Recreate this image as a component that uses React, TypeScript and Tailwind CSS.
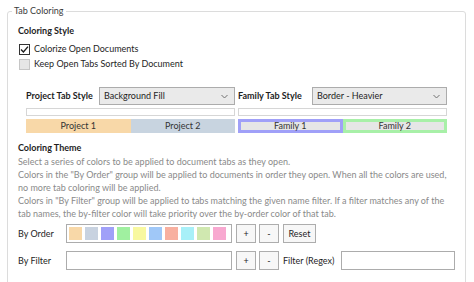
import React from 'react';

const swatches = ['#f8d8a8', '#c8d2e0', '#a0a0f8', '#a0f0a0', '#f8f8a0', '#a0c8f8', '#f8b0a0', '#a8f0f8', '#d0e8b0', '#f8a8d0'];

const Chevron = () => (
  <svg width="7" height="5" viewBox="0 0 7 5" className="shrink-0">
    <path d="M0.5 1 L3.5 4 L6.5 1" fill="none" stroke="#707070" strokeWidth="1" />
  </svg>
);

const Dropdown = ({ value, width }: { value: string; width: string }) => (
  <div className={`${width} h-[18px] flex items-center justify-between border border-[#acacac] bg-[#eaeaea] pl-[4px] pr-[6px] text-[#1e1e1e]`}>
    <span>{value}</span>
    <Chevron />
  </div>
);

const SmallButton = ({ label, width = 'w-[20px]' }: { label: string; width?: string }) => (
  <div className={`${width} h-[19px] flex items-center justify-center border border-[#adadad] bg-[#f7f7f7] text-[#1e1e1e]`}>
    {label}
  </div>
);

const App = () => {
  return (
    <div className="w-[474px] h-[282px] overflow-hidden bg-white font-['Lato',sans-serif] text-[9px] leading-[14px] text-[#1e1e1e] whitespace-nowrap">
      <fieldset className="ml-[7px] w-[459px] mt-[4px] border border-[#dcdcdc] rounded-[3px] pl-[10px] pb-[30px]">
        <legend className="-ml-[6px] px-[2px] text-[#3c3c3c]">Tab Coloring</legend>

        <div className="mt-[6px] font-bold">Coloring Style</div>

        <div className="mt-[4px] flex items-center gap-[4px] pl-[1px]">
          <div className="w-[11px] h-[11px] border border-[#333] bg-white flex items-center justify-center">
            <svg width="9" height="9" viewBox="0 0 9 9">
              <path d="M1 4.6 L3.4 7 L8 1.6" fill="none" stroke="#1e1e1e" strokeWidth="1.4" />
            </svg>
          </div>
          <span>Colorize Open Documents</span>
        </div>
        <div className="mt-[1px] flex items-center gap-[4px] pl-[1px]">
          <div className="w-[11px] h-[11px] border border-[#c6c6c6] bg-[#e6e6e6]" />
          <span>Keep Open Tabs Sorted By Document</span>
        </div>

        <div className="mt-[16px] ml-[8px] grid grid-cols-[209px_209px] gap-x-[3px]">
          <div className="flex flex-col">
            <div className="flex items-center">
              <span className="w-[73px] font-bold">Project Tab Style</span>
              <Dropdown value="Background Fill" width="w-[136px]" />
            </div>
            <div className="mt-[3px] h-[8px] border border-[#d6d6d6] bg-white" />
            <div className="mt-[3px] h-[14px] flex text-[#333]">
              <div className="flex-1 bg-[#f8d8a8] flex items-center justify-center">Project 1</div>
              <div className="flex-1 bg-[#c8d4e0] flex items-center justify-center">Project 2</div>
            </div>
          </div>
          <div className="flex flex-col">
            <div className="flex items-center">
              <span className="w-[74px] font-bold">Family Tab Style</span>
              <Dropdown value="Border - Heavier" width="w-[135px]" />
            </div>
            <div className="mt-[3px] h-[8px] border border-[#d6d6d6] bg-white" />
            <div className="mt-[3px] h-[14px] flex text-[#333]">
              <div className="flex-1 bg-[#e6e6e6] border-[3px] border-[#a0a0f8] flex items-center justify-center">Family 1</div>
              <div className="flex-1 bg-[#e6e6e6] border-[3px] border-[#a8f0a8] flex items-center justify-center">Family 2</div>
            </div>
          </div>
        </div>

        <div className="mt-[8px] font-bold">Coloring Theme</div>
        <div className="leading-[13px] text-[#8a8a8a]">
          <div>Select a series of colors to be applied to document tabs as they open.</div>
          <div>Colors in the "By Order" group will be applied to documents in order they open. When all the colors are used,</div>
          <div>no more tab coloring will be applied.</div>
          <div>Colors in "By Filter" group will be applied to tabs matching the given name filter. If a filter matches any of the</div>
          <div>tab names, the by-filter color will take priority over the by-order color of that tab.</div>
        </div>

        <div className="mt-[4px] flex items-center">
          <span className="w-[48px]">By Order</span>
          <div className="w-[166px] h-[19px] border border-[#acacac] bg-white flex items-center gap-[3px] pl-[2px]">
            {swatches.map((c) => (
              <div key={c} className="w-[13px] h-[13px]" style={{ backgroundColor: c }} />
            ))}
          </div>
          <div className="ml-[4px] flex items-center gap-[3px]">
            <SmallButton label="+" />
            <SmallButton label="-" />
            <div className="ml-[1px]">
              <SmallButton label="Reset" width="w-[33px]" />
            </div>
          </div>
        </div>

        <div className="mt-[8px] flex items-center">
          <span className="w-[48px]">By Filter</span>
          <div className="w-[166px] h-[19px] border border-[#acacac] bg-white" />
          <div className="ml-[4px] flex items-center gap-[3px]">
            <SmallButton label="+" />
            <SmallButton label="-" />
          </div>
          <span className="ml-[4px] w-[58px]">Filter (Regex)</span>
          <div className="w-[114px] h-[19px] border border-[#acacac] bg-white" />
        </div>
      </fieldset>
    </div>
  );
};

export default App;
